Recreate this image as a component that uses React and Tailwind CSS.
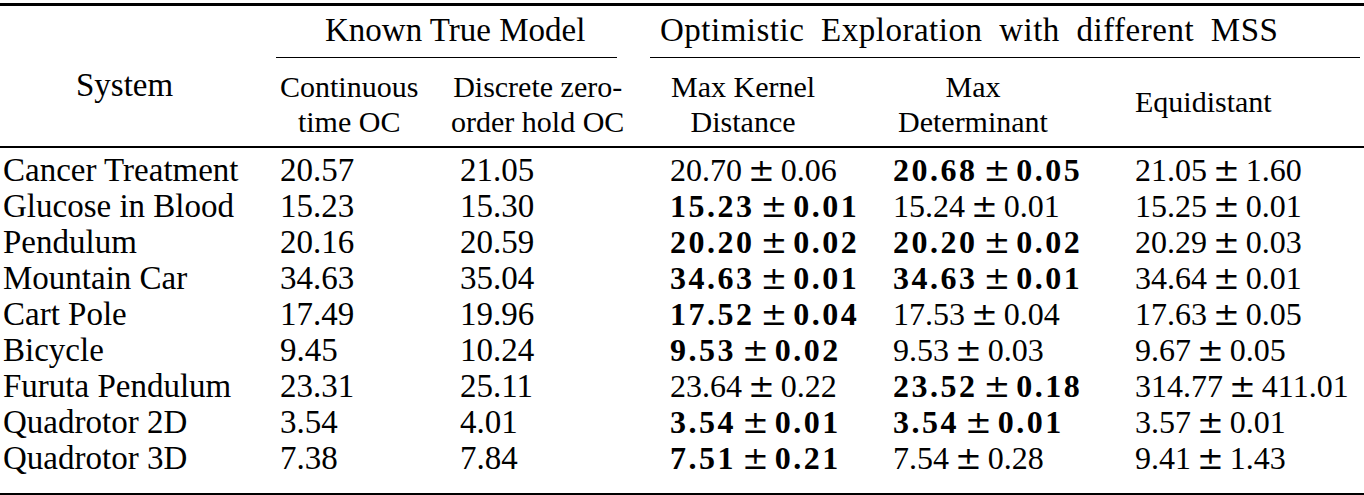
import React from 'react';

const rows = [
  ['Cancer Treatment', '20.57', '21.05', ['20.70', '0.06', false], ['20.68', '0.05', true], ['21.05', '1.60', false]],
  ['Glucose in Blood', '15.23', '15.30', ['15.23', '0.01', true], ['15.24', '0.01', false], ['15.25', '0.01', false]],
  ['Pendulum', '20.16', '20.59', ['20.20', '0.02', true], ['20.20', '0.02', true], ['20.29', '0.03', false]],
  ['Mountain Car', '34.63', '35.04', ['34.63', '0.01', true], ['34.63', '0.01', true], ['34.64', '0.01', false]],
  ['Cart Pole', '17.49', '19.96', ['17.52', '0.04', true], ['17.53', '0.04', false], ['17.63', '0.05', false]],
  ['Bicycle', '9.45', '10.24', ['9.53', '0.02', true], ['9.53', '0.03', false], ['9.67', '0.05', false]],
  ['Furuta Pendulum', '23.31', '25.11', ['23.64', '0.22', false], ['23.52', '0.18', true], ['314.77', '411.01', false]],
  ['Quadrotor 2D', '3.54', '4.01', ['3.54', '0.01', true], ['3.54', '0.01', true], ['3.57', '0.01', false]],
  ['Quadrotor 3D', '7.38', '7.84', ['7.51', '0.21', true], ['7.54', '0.28', false], ['9.41', '1.43', false]],
];

// mean ± std, bold for the best method
function Stat({ value }) {
  const [mean, std, best] = value;
  const num = best ? 'font-bold tracking-[2.5px]' : '';
  return (
    <span className="whitespace-nowrap">
      <span className={num}>{mean}</span>
      <span className="mx-[6px] font-['DejaVu_Serif',serif] font-normal">±</span>
      <span className={num}>{std}</span>
    </span>
  );
}

const cols = 'grid grid-cols-[277px_171px_219px_223px_242px_232px]';

export default function App() {
  return (
    <div className="w-[1364px] h-[495px] bg-white text-black overflow-hidden font-['Liberation_Serif',serif]">
      <div className="pt-[3px]">
        <div className="h-[3px] bg-black" />
      </div>

      {/* group headers */}
      <div className={`${cols} h-[52px] text-[33px] leading-[34px]`}>
        <div />
        <div className="col-span-2 flex flex-col">
          <div className="ml-[-1px] w-[341px] flex flex-col h-full">
            <div className="pt-[7px] pl-[49px] whitespace-nowrap">Known True Model</div>
            <div className="mt-auto h-[1.5px] bg-black" />
          </div>
        </div>
        <div className="col-span-3 flex flex-col">
          <div className="ml-[-17px] w-[710px] flex flex-col h-full">
            <div className="pt-[7px] pl-[10px] whitespace-nowrap tracking-[0.5px] [word-spacing:8px]">Optimistic Exploration with different MSS</div>
            <div className="mt-auto h-[1.5px] bg-black" />
          </div>
        </div>
      </div>

      {/* column headers */}
      <div className={`${cols} h-[88px] text-[30px] leading-[35px]`}>
        <div className="pt-[10px] pl-[76px] text-[33px]">System</div>
        <div className="pt-[11px] pl-[3px]">
          <div className="inline-block text-center">Continuous<br />time OC</div>
        </div>
        <div className="pt-[11px] pl-[3px]">
          <div className="inline-block text-center">Discrete zero-<br />order hold OC</div>
        </div>
        <div className="pt-[11px] pl-[4px]">
          <div className="inline-block text-center">Max Kernel<br />Distance</div>
        </div>
        <div className="pt-[11px] pl-[8px]">
          <div className="inline-block text-center">Max<br />Determinant</div>
        </div>
        <div className="pl-[3px] flex items-center pb-[2px]">Equidistant</div>
      </div>
      <div className="h-[1.5px] bg-black" />

      {/* body */}
      <div className="pt-[4px] text-[33px] leading-[36px]">
        {rows.map((r) => (
          <div key={r[0]} className={`${cols} h-[36px]`}>
            <div className="pl-[3px] whitespace-nowrap">{r[0]}</div>
            <div className="pl-[3px]">{r[1]}</div>
            <div className="pl-[12px]">{r[2]}</div>
            <div className="pl-[3px] text-[32px]"><Stat value={r[3]} /></div>
            <div className="pl-[3px] text-[32px]"><Stat value={r[4]} /></div>
            <div className="pl-[3px] text-[32px]"><Stat value={r[5]} /></div>
          </div>
        ))}
      </div>
      <div className="mt-[17px] h-[3px] bg-black" />
    </div>
  );
}
